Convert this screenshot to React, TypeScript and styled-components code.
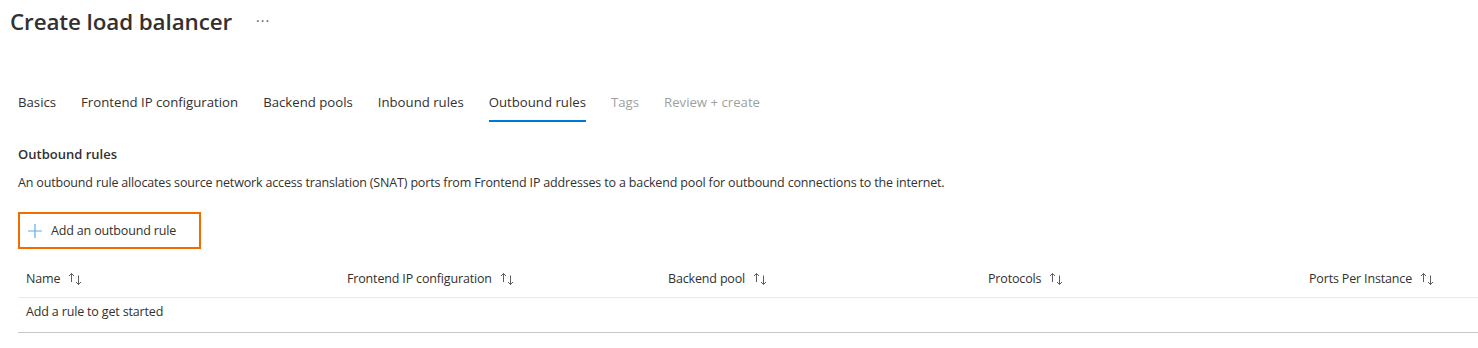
import React from "react";
import styled, { createGlobalStyle } from "styled-components";

const GlobalStyle = createGlobalStyle`
  html, body {
    margin: 0;
    padding: 0;
    background: #ffffff;
  }
  body {
    font-family: "Segoe UI", "Open Sans", "Noto Sans", sans-serif;
    color: #323130;
    -webkit-font-smoothing: antialiased;
  }
`;

const Page = styled.div`
  width: 1478px;
  height: 348px;
  overflow: hidden;
`;

const Header = styled.header`
  display: flex;
  align-items: center;
  gap: 24px;
  height: 44px;
  padding-left: 10px;
`;

const Title = styled.h1`
  margin: 0;
  font-size: 22.4px;
  font-weight: 600;
  line-height: 32px;
  letter-spacing: -0.1px;
  color: #323130;
`;

const MoreButton = styled.span`
  font-size: 14px;
  letter-spacing: 1px;
  color: #605e5c;
  line-height: 1;
  margin-top: -2px;
`;

const TabBar = styled.nav`
  display: flex;
  gap: 25px;
  margin: 44px 0 0 18px;
`;

const Tab = styled.div<{ $active?: boolean; $disabled?: boolean }>`
  font-size: 13.2px;
  line-height: 20px;
  padding: 4px 0 8px;
  color: ${(p) => (p.$disabled ? "#a19f9d" : "#323130")};
  border-bottom: 2px solid ${(p) => (p.$active ? "#0078d4" : "transparent")};
`;

const Content = styled.section`
  padding-left: 18px;
  margin-top: 22px;
`;

const SectionTitle = styled.h2`
  margin: 0;
  font-size: 13px;
  font-weight: 600;
  line-height: 20px;
`;

const Description = styled.p`
  margin: 9px 0 0;
  font-size: 12.5px;
  letter-spacing: -0.16px;
  line-height: 20px;
`;

const AddButton = styled.button`
  display: flex;
  align-items: center;
  gap: 8px;
  height: 37px;
  margin-top: 19px;
  padding: 0 23px 0 7px;
  border: 2px solid #f36c00;
  background: #ffffff;
  font: inherit;
  font-size: 12.5px;
  letter-spacing: -0.16px;
  color: #323130;
  cursor: pointer;
`;

const Table = styled.div`
  margin-top: 11px;
`;

const Row = styled.div<{ $head?: boolean }>`
  display: grid;
  grid-template-columns: 321px 321px 320px 321px 1fr;
  height: ${(p) => (p.$head ? "37px" : "34px")};
  align-items: ${(p) => (p.$head ? "center" : "start")};
  border-bottom: 1px solid ${(p) => (p.$head ? "#edebe9" : "#c8c6c4")};
`;

const HeadCell = styled.div`
  display: flex;
  align-items: center;
  gap: 8px;
  padding-left: 8px;
  font-size: 12.5px;
  letter-spacing: -0.16px;
  color: #323130;
`;

const Cell = styled.div`
  padding: 5px 0 0 8px;
  font-size: 12.5px;
  letter-spacing: -0.16px;
  line-height: 18px;
  color: #323130;
  grid-column: 1 / -1;
`;

const PlusIcon = () => (
  <svg width="16" height="16" viewBox="0 0 16 16">
    <path d="M8 1v14M1 8h14" stroke="#62abea" strokeWidth="1.2" fill="none" />
  </svg>
);

const SortIcon = () => (
  <svg width="14" height="14" viewBox="0 0 14 14">
    <g stroke="#605e5c" strokeWidth="1" fill="none">
      <path d="M3.5 10V1.5M1 4l2.5-2.5L6 4" />
      <path d="M10.5 3.5V12.5M8 10l2.5 2.5L13 10" />
    </g>
  </svg>
);

const tabs = [
  { label: "Basics" },
  { label: "Frontend IP configuration" },
  { label: "Backend pools" },
  { label: "Inbound rules" },
  { label: "Outbound rules", active: true },
  { label: "Tags", disabled: true },
  { label: "Review + create", disabled: true },
];

const columns = ["Name", "Frontend IP configuration", "Backend pool", "Protocols", "Ports Per Instance"];

export default function App() {
  return (
    <>
      <GlobalStyle />
      <Page>
        <Header>
          <Title>Create load balancer</Title>
          <MoreButton>···</MoreButton>
        </Header>
        <TabBar>
          {tabs.map((t) => (
            <Tab key={t.label} $active={t.active} $disabled={t.disabled}>
              {t.label}
            </Tab>
          ))}
        </TabBar>
        <Content>
          <SectionTitle>Outbound rules</SectionTitle>
          <Description>
            An outbound rule allocates source network access translation (SNAT) ports from Frontend IP addresses to a
            backend pool for outbound connections to the internet.
          </Description>
          <AddButton>
            <PlusIcon />
            Add an outbound rule
          </AddButton>
          <Table>
            <Row $head>
              {columns.map((c) => (
                <HeadCell key={c}>
                  {c}
                  <SortIcon />
                </HeadCell>
              ))}
            </Row>
            <Row>
              <Cell>Add a rule to get started</Cell>
            </Row>
          </Table>
        </Content>
      </Page>
    </>
  );
}
